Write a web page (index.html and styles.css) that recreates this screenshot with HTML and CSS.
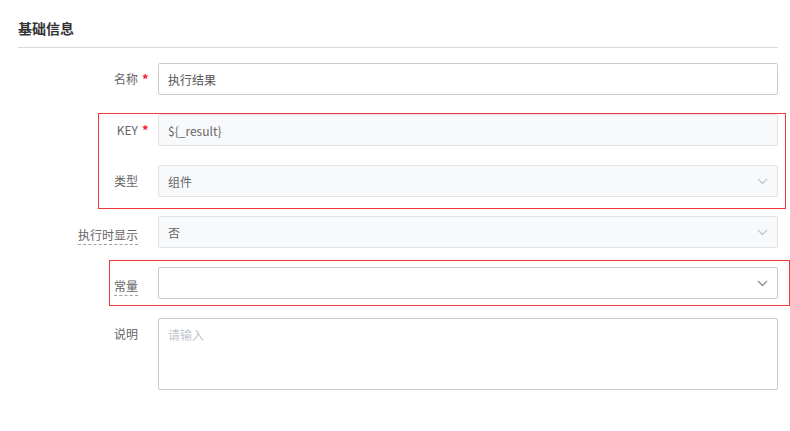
FILE: index.html
```html
<!DOCTYPE html>
<html lang="zh">
<head>
<meta charset="utf-8">
<link rel="stylesheet" href="styles.css">
</head>
<body>
<div class="page">
  <div class="section-title">基础信息</div>
  <div class="form">
    <div class="row">
      <div class="label"><span>名称</span><span class="req">*</span></div>
      <div class="field input">执行结果</div>
    </div>
    <div class="row">
      <div class="label"><span>KEY</span><span class="req">*</span></div>
      <div class="field input disabled">${_result}</div>
    </div>
    <div class="row">
      <div class="label"><span>类型</span><span class="req"></span></div>
      <div class="field select disabled"><span>组件</span>
        <svg class="chev" width="11" height="7" viewBox="0 0 11 7"><polyline points="1,1 5.5,5.5 10,1" fill="none" stroke="currentColor" stroke-width="1.4"/></svg>
      </div>
    </div>
    <div class="row">
      <div class="label"><span class="tip">执行时显示</span><span class="req"></span></div>
      <div class="field select disabled"><span>否</span>
        <svg class="chev" width="11" height="7" viewBox="0 0 11 7"><polyline points="1,1 5.5,5.5 10,1" fill="none" stroke="currentColor" stroke-width="1.4"/></svg>
      </div>
    </div>
    <div class="row">
      <div class="label"><span class="tip">常量</span><span class="req"></span></div>
      <div class="field select"><span></span>
        <svg class="chev" width="11" height="7" viewBox="0 0 11 7"><polyline points="1,1 5.5,5.5 10,1" fill="none" stroke="currentColor" stroke-width="1.4"/></svg>
      </div>
    </div>
    <div class="row row-top">
      <div class="label"><span>说明</span><span class="req"></span></div>
      <div class="field textarea"><span class="placeholder">请输入</span></div>
    </div>
  </div>
  <div class="mark mark-1"></div>
  <div class="mark mark-2"></div>
</div>
</body>
</html>
```
FILE: styles.css
```css
html, body {
  margin: 0;
  padding: 0;
  background: #ffffff;
}
body {
  font-family: "Noto Sans CJK SC", "Noto Sans", sans-serif;
  font-size: 12px;
  color: #666666;
}
.page {
  position: relative;
  width: 790px;
  height: 431px;
  box-sizing: border-box;
  padding: 18px 12px 0 18px;
}
.section-title {
  font-size: 14px;
  font-weight: bold;
  color: #333333;
  line-height: 20px;
  padding-bottom: 9px;
  border-bottom: 1px solid #d9d9de;
}
.form {
  display: flex;
  flex-direction: column;
  gap: 19px;
  padding-top: 15px;
}
.row {
  display: flex;
  align-items: center;
}
.row-top {
  align-items: flex-start;
}
.label {
  width: 140px;
  flex: none;
  display: flex;
  justify-content: flex-end;
  align-items: center;
  padding-right: 10px;
  box-sizing: border-box;
  line-height: 32px;
  color: #666666;
}
.req {
  width: 10px;
  box-sizing: border-box;
  padding-left: 4px;
  color: #f5222d;
  font-weight: bold;
  font-size: 13px;
}
.tip {
  line-height: 18px;
  border-bottom: 1px dashed #a0a0a0;
  margin-top: 6px;
}
.field {
  flex: 1;
  height: 32px;
  box-sizing: border-box;
  border: 1px solid #c9cbd0;
  border-radius: 2px;
  background: #ffffff;
  padding: 0 9px;
  display: flex;
  align-items: center;
  color: #555555;
}
.disabled {
  background: #f8f9fb;
  border-color: #e0e2e7;
  color: #666666;
}
.select {
  justify-content: space-between;
}
.chev {
  color: #8f9399;
}
.disabled .chev {
  color: #c6c8ce;
}
.textarea {
  height: 72px;
  align-items: flex-start;
  padding-top: 6px;
  line-height: 20px;
}
.placeholder {
  color: #c0c4cc;
}
.mark {
  position: absolute;
  border: 1px solid #f0393b;
  box-sizing: border-box;
}
.mark-1 {
  left: 98px;
  top: 113px;
  width: 688px;
  height: 96px;
}
.mark-2 {
  left: 109px;
  top: 260px;
  width: 681px;
  height: 46px;
}
```
